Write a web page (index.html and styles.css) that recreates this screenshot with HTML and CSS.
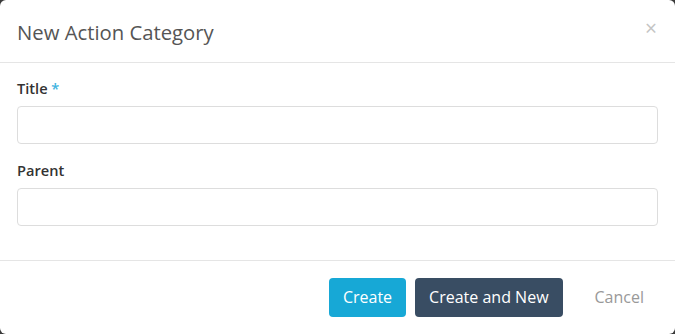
FILE: index.html
```html
<!DOCTYPE html>
<html>
<head>
<meta charset="utf-8">
<link rel="stylesheet" href="styles.css">
</head>
<body>
<div class="modal">
  <div class="modal-header">
    <h4 class="modal-title">New Action Category</h4>
    <button class="close" type="button">×</button>
  </div>
  <div class="modal-body">
    <div class="form-group">
      <label class="label">Title <span class="req">*</span></label>
      <input class="input" type="text">
    </div>
    <div class="form-group last">
      <label class="label">Parent</label>
      <input class="input" type="text">
    </div>
  </div>
  <div class="modal-footer">
    <button class="btn btn-primary" type="button">Create</button>
    <button class="btn btn-dark" type="button">Create and New</button>
    <button class="btn btn-link" type="button">Cancel</button>
  </div>
</div>
</body>
</html>
```
FILE: styles.css
```css
* { box-sizing: border-box; }
html, body {
  margin: 0;
  padding: 0;
  background: #3a3a3a;
  width: 675px;
  height: 334px;
  overflow: hidden;
}
body {
  font-family: "Open Sans", "Liberation Sans", sans-serif;
  color: #333;
}
.modal {
  width: 675px;
  height: 334px;
  background: #fff;
  border-radius: 6px;
  display: flex;
  flex-direction: column;
}
.modal-header {
  height: 63px;
  padding: 0 17px 0 17px;
  border-bottom: 1px solid #e5e5e5;
  display: flex;
  align-items: center;
  justify-content: space-between;
}
.modal-title {
  margin: 0;
  font-size: 20.3px;
  font-weight: 400;
  color: #555;
  line-height: 28px;
  padding-top: 1px;
}
.close {
  border: 0;
  background: none;
  padding: 0 0 5px;
  margin-right: 1px;
  font-family: "Open Sans", sans-serif;
  font-size: 21px;
  line-height: 1;
  color: #c4c4c4;
  font-weight: 400;
  cursor: pointer;
}
.modal-body {
  padding: 15px 17px 16px;
  border-bottom: 1px solid #e5e5e5;
}
.form-group {
  display: flex;
  flex-direction: column;
  margin-bottom: 16px;
}
.form-group.last { margin-bottom: 18px; }
.label {
  font-size: 14.6px;
  font-weight: 600;
  line-height: 20px;
  margin-bottom: 8px;
  color: #333;
}
.req { color: #3fb3e0; }
.input {
  height: 38px;
  width: 100%;
  border: 1px solid #ddd;
  border-radius: 4px;
  background: #fff;
  font: inherit;
  padding: 6px 12px;
}
.modal-footer {
  flex: 1;
  display: flex;
  justify-content: flex-end;
  align-items: center;
  padding: 0 17px 1px;
  gap: 9px;
}
.btn {
  height: 39px;
  border: 0;
  border-radius: 4px;
  font-family: "Open Sans", sans-serif;
  font-size: 16px;
  padding: 0 14px;
  color: #fff;
  cursor: pointer;
}
.btn-primary { background: #17a8d6; }
.btn-dark { background: #394d63; }
.btn-link {
  background: none;
  color: #999;
  margin-left: 9px;
}
```
